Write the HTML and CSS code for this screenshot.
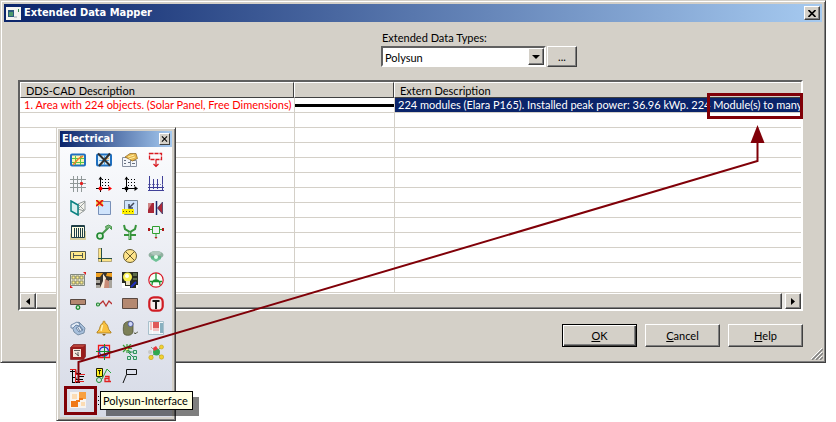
FILE: index.html
```
<!DOCTYPE html>
<html lang="en">
<head>
<title>Extended Data Mapper</title>
<meta charset="utf-8">
<meta name="viewport" content="width=device-width, initial-scale=1">
<link rel="stylesheet" href="styles.css">
</head>
<body>

<main class="dialog">
  <header class="titlebar">
    <svg class="app_icon" viewBox="0 0 15 13" shape-rendering="crispEdges">
      <path fill="#f4f4f0" d="M0 0h15v13H0z"/>
      <path fill="#2c5a7c" d="M2 3h6v7H2z"/>
      <path fill="#4d9a6c" d="M3 5h4v4H3z"/>
      <path fill="#c8ccd0" d="M8 9h3v2H8z"/>
      <path fill="#3a8a50" d="M12 2h1v3h-1z"/>
    </svg>
    <h1>Extended Data Mapper</h1>
    <button class="close" aria-label="Close">
      <svg viewBox="0 0 8 7"><path stroke="#000" stroke-width="1.6" d="M.5 0l7 7M7.500 0l-7 7"/></svg>
    </button>
  </header>

  <form class="content">
    <div class="types">
      <label for="data_type">Extended Data Types:</label>
      <div class="types_row">
        <span class="combo">
          <select id="data_type"><option>Polysun</option></select>
          <span class="combo_arrow"></span>
        </span>
        <button type="button" class="btn browse">...</button>
      </div>
    </div>

    <div class="list">
      <table>
        <colgroup>
          <col class="col_dds">
          <col class="col_link">
          <col>
        </colgroup>
        <thead>
          <tr><th>DDS-CAD Description</th><th></th><th>Extern Description</th></tr>
        </thead>
        <tbody>
          <tr>
            <td class="unmatched">1. Area with 224 objects. (Solar Panel, Free Dimensions)</td>
            <td class="linked"><hr></td>
            <td class="selected">224 modules (Elara P165). Installed peak power: 36.96 kWp. 224 Module(s) to many</td>
          </tr>
          <tr><td></td><td></td><td></td></tr>
          <tr><td></td><td></td><td></td></tr>
          <tr><td></td><td></td><td></td></tr>
          <tr><td></td><td></td><td></td></tr>
          <tr><td></td><td></td><td></td></tr>
          <tr><td></td><td></td><td></td></tr>
          <tr><td></td><td></td><td></td></tr>
          <tr><td></td><td></td><td></td></tr>
          <tr><td></td><td></td><td></td></tr>
          <tr><td></td><td></td><td></td></tr>
          <tr><td></td><td></td><td></td></tr>
          <tr><td></td><td></td><td></td></tr>
        </tbody>
      </table>
      <div class="scrollbar">
        <button type="button" class="scroll_btn" aria-label="Scroll left"><svg viewBox="0 0 4 7"><path d="M4 0v7L0 3.500z"/></svg></button>
        <span class="thumb"></span>
        <button type="button" class="scroll_btn" aria-label="Scroll right"><svg viewBox="0 0 4 7"><path d="M0 0v7l4-3.500z"/></svg></button>
      </div>
    </div>

    <div class="actions">
      <button type="button" class="btn default"><u>O</u>K</button>
      <button type="button" class="btn"><u>C</u>ancel</button>
      <button type="button" class="btn"><u>H</u>elp</button>
    </div>
  </form>

  <svg class="grip" viewBox="0 0 12 12">
    <path stroke="#fff" d="M0 11L11 0M4 11l7-7M8 11l3-3"/>
    <path stroke="#808080" stroke-width="1.500" d="M1 12L12 1M5 12l7-7M9 12l3-3"/>
  </svg>
</main>

<aside class="palette">
  <header class="palette_title">
    <h2>Electrical</h2>
    <button class="close small" aria-label="Close palette">
      <svg viewBox="0 0 8 7"><path stroke="#000" stroke-width="1.200" d="M1 .5l6 6M7 .5l-6 6"/></svg>
    </button>
  </header>
  <div class="tools">
    <!-- grid and view -->
    <button class="tool" aria-label="Edit plan"><svg viewBox="0 0 16 16"><rect x="1" y="2.500" width="14" height="11" rx="1" fill="#fff4b0" stroke="#2070c0" stroke-width="2"/><path stroke="#58c848" d="M5.500 4v9M10.500 4v9M2 6.500h12M2 10.500h12"/><path stroke="#f08030" stroke-width="1.500" fill="none" d="M3 13l5-6 5-3"/></svg></button>
    <button class="tool" aria-label="Delete plan"><svg viewBox="0 0 16 16"><rect x="1" y="2.500" width="14" height="11" rx="1" fill="#dff0f8" stroke="#2070c0" stroke-width="2"/><path stroke="#58a8e8" d="M3 8.500h10M8.500 4v9"/><path stroke="#f0a040" d="M9 8l4-2"/><path stroke="#303030" stroke-width="2" d="M2 1.500l12 12M14 1.500L3 14"/></svg></button>
    <button class="tool" aria-label="Properties"><svg viewBox="0 0 16 16"><path fill="#f4f6fa" stroke="#8890a0" d="M.5 5.500h8v9h-8zM8.500 8.500h6v6h-6z"/><path fill="#e8b850" stroke="#8a6420" stroke-width=".7" d="M3 5l5-3.500h6l1.500 5-5 2.500z"/><path stroke="#fff0a0" d="M6 5l6-2M7 7l6-2"/><path stroke="#687080" d="M2 8.500h2M2 11.500h2M6 10.500h2M10 11.500h3"/></svg></button>
    <button class="tool" aria-label="Move area"><svg viewBox="0 0 16 16"><rect x="1.500" y="1.500" width="12" height="6" fill="none" stroke="#d81820" stroke-width="1.300" stroke-dasharray="4 1"/><path stroke="#d81820" stroke-width="1.200" fill="none" d="M8 8v7M5.500 12L8 14.500l2.500-2.500"/></svg></button>

    <button class="tool" aria-label="Grid"><svg viewBox="0 0 16 16"><path stroke="#909898" d="M3.500 0v16M7.500 0v16M11.500 0v16M0 3.500h16M0 7.500h16M0 11.500h16"/><path stroke="#e02020" stroke-width="2" d="M11.500 6v3M10 7.500h3"/></svg></button>
    <button class="tool" aria-label="Origin"><svg viewBox="0 0 16 16"><path stroke="#000" stroke-dasharray="1 2" d="M6 3.500h9M6 6.500h9M6 9.500h9"/><path stroke="#000" d="M4.500 1v15M0 12.500h14"/><path d="M2.500 3.500l2-3 2 3z"/><path fill="#f00" d="M2.500 12.500a2 2 0 1 0 4 0a2 2 0 1 0-4 0M12.500 10v5l3.500-2.500z"/></svg></button>
    <button class="tool" aria-label="Grid origin"><svg viewBox="0 0 16 16"><path stroke="#000" stroke-dasharray="1 2" d="M6 3.500h9M6 6.500h9M6 9.500h9"/><path stroke="#000" d="M4.500 1v15M0 12.500h14"/><path d="M2.500 3.500l2-3 2 3zM2.500 12.500a2 2 0 1 0 4 0a2 2 0 1 0-4 0M12.500 10v5l3.500-2.500z"/></svg></button>
    <button class="tool" aria-label="Levels"><svg viewBox="0 0 16 16"><path stroke="#404098" d="M1.500 0v15M5.500 3v10M9.500 3v10M14.500 0v15M0 11.500h16M0 14.500h16"/><path stroke="#8080b8" stroke-dasharray="1 1" d="M0 8.500h16"/></svg></button>

    <!-- rooms -->
    <button class="tool" aria-label="3D view"><svg viewBox="0 0 16 16"><path fill="#f4f4ee" stroke="#808888" stroke-width=".8" d="M8 4l7-3v9l-7 5zM8 9l7-7M8 9l6 2M8 4l6 6"/><path fill="#d8f0f0" stroke="#088080" stroke-width="1.500" d="M1 1l7 4v10l-7-4z"/></svg></button>
    <button class="tool" aria-label="New sheet"><svg viewBox="0 0 16 16"><path fill="#d0e4fc" stroke="#7890b8" d="M2.500 1.500h12v13h-12z"/><path fill="#f0e060" d="M0 0h7v6H0z"/><path stroke="#e01010" stroke-width="1.700" d="M0 0l7 6M7 0L0 6"/></svg></button>
    <button class="tool" aria-label="Measure"><svg viewBox="0 0 16 16"><path fill="#d0e4fc" stroke="#788898" d="M2.500.5h13v14h-13z"/><path stroke="#404858" stroke-width="1.500" fill="none" d="M12 3L7 8M7 4v4h4"/><path fill="#fff000" d="M0 9h12v5H0z"/><path stroke="#605800" stroke-dasharray="1 2" d="M1 11.500h10"/></svg></button>
    <button class="tool" aria-label="Mirror"><svg viewBox="0 0 16 16"><path fill="#a82838" d="M0 3h6v10H0z"/><path fill="#d08888" d="M0 3h4L0 10z"/><path stroke="#182868" stroke-width="1.500" d="M8.500 1v14"/><path fill="#b02838" stroke="#303060" stroke-width=".7" d="M14.500 2v12L9.500 8z"/></svg></button>

    <button class="tool" aria-label="Distribution board"><svg viewBox="0 0 16 16"><path fill="#d8d0a0" d="M0 10l4-3h12v9H0z"/><path fill="#fffde0" stroke="#204048" d="M1.500 1.500h13v12h-13z"/><path stroke="#204048" d="M1 2.500h14M4.500 4v9M6.500 4v9M8.500 4v9M10.500 4v9M12.500 4v9"/></svg></button>
    <button class="tool" aria-label="Switch"><svg viewBox="0 0 16 16"><path stroke="#48984c" stroke-width="2" fill="none" d="M6 10l6-6"/><circle cx="4" cy="12" r="3" fill="#d8f0d8" stroke="#208830" stroke-width="1.700"/><path fill="#80b880" stroke="#48984c" d="M10.500 5.500l-1-3 3-1.500 3 1.500v3l-2-2z"/></svg></button>
    <button class="tool" aria-label="Socket"><svg viewBox="0 0 16 16"><path stroke="#38943c" stroke-width="2" fill="none" d="M2 1l1 4 5 3 5-3 1-4M2 11h12"/><path stroke="#38943c" stroke-width="3" d="M8 7v9"/><path stroke="#90d090" d="M7.500 8v7"/></svg></button>
    <button class="tool" aria-label="Junction box"><svg viewBox="0 0 16 16"><path stroke="#30a030" fill="none" d="M4.500 2.500h7v7h-7zM1 5.500h3M12 5.500h3M8 10v3"/><path fill="#b01818" d="M0 4h2v3H0zM14 4h2v3h-2zM6.500 13h3L8 15z"/></svg></button>

    <!-- luminaires -->
    <button class="tool" aria-label="Fluorescent lamp"><svg viewBox="0 0 16 16"><path fill="#ffe98a" stroke="#505850" d="M.5 3.500h15v8H.5z"/><path stroke="#505850" fill="none" d="M3.500 5v5M12.500 5v5M3 7.500h10"/></svg></button>
    <button class="tool" aria-label="Cable tray"><svg viewBox="0 0 16 16"><path fill="#fce488" stroke="#908050" stroke-width=".6" d="M2.500.5h3v10h10v3h-13z"/><path stroke="#285048" d="M5.500 0v14M2 10.500h14"/></svg></button>
    <button class="tool" aria-label="Lamp"><svg viewBox="0 0 16 16"><circle cx="8" cy="8" r="6.500" fill="#ffe48a" stroke="#685c30"/><path stroke="#685c30" d="M3.500 3.500l9 9M12.500 3.500l-9 9"/></svg></button>
    <button class="tool" aria-label="Spot"><svg viewBox="0 0 16 16"><ellipse cx="8" cy="7" rx="7.500" ry="4" fill="#90b0a0"/><ellipse cx="8" cy="5" rx="5" ry="2" fill="#b0c8bc"/><path fill="#50b880" opacity=".8" d="M3 8h10l0 3-5 3-5-3z"/><circle cx="8" cy="9" r="2" fill="#e8fff0"/></svg></button>

    <button class="tool" aria-label="Lamp field"><svg viewBox="0 0 16 16"><path fill="#e8e4c8" stroke="#808880" d="M.5 2.500h14v11H.5z"/><path fill="#fff088" stroke="#787c60" stroke-width=".8" d="M2 4h3v3H2zM6 4h3v3H6zM10 4h3v3h-3zM2 9h3v3H2zM6 9h3v3H6zM10 9h3v3h-3z"/><path fill="#e02020" d="M13 0h3v3zM0 13v3h3z"/></svg></button>
    <button class="tool" aria-label="Render"><svg viewBox="0 0 16 16"><path fill="#383430" d="M0 0h16v16H0z"/><path fill="#f0a020" d="M0 1h7L4 5H0zM11 1h5v4l-6-1z"/><path fill="#f8ead8" d="M7 2l3 4-1 10H4l3-7z"/><path fill="#c88c78" d="M9 7l4 2v7H8z"/><path fill="#a8a49c" d="M0 8h4v3H0zM13 8h3v8h-3zM0 13h4v3H0z"/></svg></button>
    <button class="tool" aria-label="Light calculation"><svg viewBox="0 0 16 16"><path fill="#282c20" d="M0 0h16v16H0z"/><path fill="#5c6c48" d="M11 1h4v3h-4zM11 6h4v2h-4z"/><circle cx="5.500" cy="5" r="4.500" fill="#f8f050"/><circle cx="5" cy="4" r="2" fill="#fffff0"/><path fill="#e8e0c0" d="M4 9h4v4H4z"/><path fill="#fff" d="M0 11h3v5H0zM3 14h5v2H3zM14 13h2v3h-2z"/><path stroke="#2030c0" stroke-width="2" d="M9 15l5-5"/></svg></button>
    <button class="tool" aria-label="Phase"><svg viewBox="0 0 16 16"><circle cx="8" cy="8" r="7.200" fill="#f8fff8" stroke="#d81828" stroke-width="1.200"/><path stroke="#189030" stroke-width="1.300" fill="none" d="M8 1v7M2 9.500h12M4 13c0-3 1-5 4-5s4 2 4 5"/></svg></button>

    <!-- heating, alarms -->
    <button class="tool" aria-label="Heating panel"><svg viewBox="0 0 16 16"><path class="panel_fill" stroke="#584840" d="M.5 3.500h15v5H.5z"/><circle cx="8" cy="11.500" r="1.800" fill="#d8f0d8" stroke="#208830" stroke-width="1.300"/></svg></button>
    <button class="tool" aria-label="Heating cable"><svg viewBox="0 0 16 16"><path stroke="#b83030" stroke-width="1.300" fill="none" d="M4 8l3-3 3 5 3-5 3 3"/><circle cx="2" cy="8.500" r="1.500" fill="#d8f0d8" stroke="#208830" stroke-width="1.200"/></svg></button>
    <button class="tool" aria-label="Heating foil"><svg viewBox="0 0 16 16"><path class="panel_fill" stroke="#584840" d="M.5 2.500h15v10H.5z"/></svg></button>
    <button class="tool" aria-label="Thermostat"><svg viewBox="0 0 16 16"><rect x="1.300" y="1.300" width="13.400" height="13.400" rx="4.500" fill="#f4eeee" stroke="#d01c24" stroke-width="2.200"/><path stroke="#181818" stroke-width="2" d="M4.500 5h7M8 5v8"/></svg></button>

    <button class="tool" aria-label="Telephone"><svg viewBox="0 0 16 16"><path fill="#a8c0dc" stroke="#688098" stroke-width=".8" d="M2 6l7-4 6 6-1 5-6 2-4-3z"/><path fill="#e4ecf6" stroke="#587498" stroke-width=".8" d="M1 5l6-3 3 2-1 2-3-1-3 3H1zM6 8l4-2 3 4-4 2z"/><path stroke="#486488" stroke-width=".8" d="M8 8l2 3M10 7l2 3"/></svg></button>
    <button class="tool" aria-label="Alarm"><svg viewBox="0 0 16 16"><path fill="#f8c040" stroke="#a87818" stroke-width=".8" d="M8 1c1 0 1 1 1 2 3 1 3 5 4 7l2 2v1H1v-1l2-2c1-2 1-6 4-7 0-1 0-2 1-2z"/><path stroke="#fff0b0" stroke-width="1.500" d="M6.500 5l-1.500 6"/><path fill="#805818" d="M6 14h4l-2 2z"/></svg></button>
    <button class="tool" aria-label="Detector"><svg viewBox="0 0 16 16"><path fill="#7c8058" stroke="#505438" stroke-width=".8" d="M2 4c2-3 8-4 9-1v9c-1 4-7 4-9 2-1-3-1-7 0-10z"/><circle cx="8.500" cy="4" r="2.500" fill="#d0d8f8" stroke="#4450a0" stroke-width=".8"/><path stroke="#404428" fill="none" d="M12 13l2 .5 2-2"/></svg></button>
    <button class="tool" aria-label="Climate"><svg viewBox="0 0 16 16"><path fill="#f0f4f6" stroke="#a8c0cc" d="M.5 1.500h15v13H.5z"/><path fill="#e05858" d="M5 2h6v6H5z"/><path fill="#f4c0c0" d="M2 2h3v8H2zM5 8h6v3H5z"/><path fill="#88b0c0" d="M12 3h3v10h-3z"/><path stroke="#fff" stroke-width=".8" d="M4.500 2v12M11.500 2v12"/></svg></button>

    <!-- documents, schematics -->
    <button class="tool" aria-label="Catalogue"><svg viewBox="0 0 16 16"><path fill="#981c1c" stroke="#701010" stroke-width=".6" d="M.5 3.500l3-3h12v12l-2 3H.5z"/><path fill="#b84038" d="M1 3l3-2h11l-2 2z"/><path fill="#f4e8dc" d="M3 5h8v8H3z"/><path stroke="#383838" stroke-width=".8" fill="none" d="M4 6.500h6M5 9l4 3M8 8v4"/></svg></button>
    <button class="tool" aria-label="Target"><svg viewBox="0 0 16 16"><path fill="none" stroke="#f01818" stroke-width="1.300" d="M2.500 1.500h11v12h-11z"/><circle cx="8" cy="7.500" r="4.500" fill="none" stroke="#2030d0" stroke-width="1.300"/><path stroke="#189030" d="M8.500 0v16M0 7.500h16"/></svg></button>
    <button class="tool" aria-label="Generate circuit"><svg viewBox="0 0 16 16"><path stroke="#38a038" stroke-width="1.200" d="M5 0v9M0 4.500h10M1 1l8 8M9 0L1 8"/><path fill="#fff080" d="M4 3h2v3H4z"/><path stroke="#309060" fill="#c8f0d8" d="M6 8l6 0M6 8l6 6M11.500 6.500h3v3h-3zM11.500 12.500h3v3h-3zM5.500 12.500h3v3h-3z"/></svg></button>
    <button class="tool" aria-label="Network"><svg viewBox="0 0 16 16"><path stroke="#909890" d="M3 3l10 10M13 3L3 13"/><circle cx="8.500" cy="8" r="3.500" fill="#30a850"/><path fill="#e83840" d="M5 4l3-2 2 3-4 2z"/><g fill="#f0d030" stroke="#b89810" stroke-width=".5"><circle cx="13.500" cy="3" r="2"/><circle cx="13.500" cy="13" r="2.200"/><circle cx="3" cy="13.500" r="2.200"/></g><circle cx="2" cy="8" r="2" fill="#c8c8c8"/></svg></button>

    <button class="tool" aria-label="Wiring"><svg viewBox="0 0 16 16"><path stroke="#000" fill="none" d="M2.500 1v14M0 3.500h6v2h5M2 9.500h4v2h7M8 8.500h6M2 14.500h8"/><path stroke="#e02020" fill="none" d="M0 1.500h6v5h9M5.500 2v13M5 13.500h9"/></svg></button>
    <button class="tool" aria-label="Symbols"><svg viewBox="0 0 16 16"><path fill="#fff020" stroke="#202000" d="M.5.500h6v8h-6z"/><path stroke="#202000" d="M2 2.500h3M3.500 2.500v4"/><path stroke="#28a038" fill="none" d="M6 11l5-10 4 4"/><circle cx="3" cy="12" r="2.500" fill="none" stroke="#189030"/><path stroke="#e02020" stroke-width="1.300" fill="none" d="M9 8.500h4v5H9v-3h4M13 13.500h2"/></svg></button>
    <button class="tool" aria-label="Label"><svg viewBox="0 0 16 16"><path stroke="#101010" fill="none" d="M1 15L4.500 6.500v-5h10v5h-10"/></svg></button>
    <span></span>

    <button class="tool" aria-label="Polysun-Interface"><svg viewBox="0 0 16 16"><path fill="#f8f4f0" d="M0 0h16v16H0z"/><path fill="#f8a040" d="M9 0h7v7H9z"/><path fill="#f07818" d="M1 9h7v6H1zM9 6h4v2H9zM6 8h4v2H6z"/><path fill="#fcdcb4" d="M2 2h5v5H2zM11 10h4v4h-4z"/></svg></button>
    <button class="tool" aria-label="Print list"><svg viewBox="0 0 16 16"><path stroke="#000" stroke-dasharray="1 2" fill="none" d="M-4 4.500h16M-4 8.500h16M-4 12.500h16"/></svg></button>
  </div>
  <div class="tooltip" role="tooltip">Polysun-Interface</div>
</aside>

<!-- callouts from the tool to the result it gives -->
<svg class="callouts" viewBox="0 0 836 422">
  <path class="frame" d="M708.500 94.500h93v23h-93zM65.500 387.500h30v26h-30z"/>
  <path class="arrow_line" d="M78.500 383v-21L757.500 161v-20"/>
  <path class="arrow_head" d="M757.500 125l7 18h-14z"/>
</svg>

</body>
</html>
```

FILE: styles.css
```
* {
  box-sizing: border-box;
}
body {
  position: relative;
  margin: 0;
  min-height: 422px;
  background: #fff;
  font: 11px/13px Lato, "Liberation Sans", sans-serif;
  color: #000;
}
h1, h2 {
  margin: 0;
  color: #fff;
  font: bold 11px/14px "DejaVu Sans Condensed", Tahoma, sans-serif;
}
button, select {
  font: inherit;
  color: inherit;
  padding: 0;
  margin: 0;
}
svg {
  display: block;
}

/* dialog window */
.dialog {
  position: relative;
  margin-right: 10px;
  padding: 2px;
  background: #d4d0c8;
  border: 1px solid;
  border-color: #d4d0c8 #404040 #404040 #d4d0c8;
  box-shadow: inset 1px 1px #fff, inset -1px -1px #808080;
}
.titlebar {
  display: flex;
  align-items: center;
  height: 18px;
  margin: 1px;
  padding: 0 2px;
  background: linear-gradient(to right, #0a246a, #a6caf0);
}
.app_icon {
  width: 15px;
  height: 13px;
  margin-right: 3px;
}
.close {
  display: grid;
  place-items: center;
  width: 16px;
  height: 14px;
  margin-left: auto;
  background: #d4d0c8;
  border: 1px solid;
  border-color: #fff #404040 #404040 #fff;
  box-shadow: inset -1px -1px #808080;
}
.close svg {
  width: 8px;
  height: 7px;
}
.close.small {
  width: 11px;
  height: 12px;
  box-shadow: none;
}
.close.small svg {
  width: 7px;
  height: 6px;
}
.content {
  padding: 8px 20px 13px 15px;
}

/* type selection */
.types {
  width: 196px;
  margin: 0 auto 13px 363px;
}
.types label {
  display: block;
  margin: 0 1px 2px;
}
.types_row {
  display: flex;
  gap: 1px;
}
.combo {
  position: relative;
  width: 165px;
}
.combo select {
  width: 100%;
  height: 21px;
  padding: 1px 20px 0 2px;
  appearance: none;
  background: #fff;
  border: 2px solid;
  border-color: #606060 #fff #fff #606060;
  border-radius: 0;
}
.combo_arrow {
  position: absolute;
  top: 2px;
  right: 2px;
  display: grid;
  place-items: center;
  width: 16px;
  height: 17px;
  background: #d4d0c8;
  border: 1px solid;
  border-color: #fff #404040 #404040 #fff;
  box-shadow: inset -1px -1px #808080;
  pointer-events: none;
}
.combo_arrow::after {
  content: "";
  border: 4px solid transparent;
  border-top-color: #000;
  border-bottom: 0;
}
.btn {
  width: 75px;
  height: 23px;
  background: #d4d0c8;
  border: 1px solid;
  border-color: #fff #404040 #404040 #fff;
  box-shadow: inset -1px -1px #808080;
}
.btn.browse {
  width: 30px;
  height: 21px;
}
.btn.default {
  border-color: #000;
  box-shadow: inset 1px 1px #fff, inset -1px -1px #404040, inset -2px -2px #808080;
}

/* mapping list */
.list {
  border: 2px solid;
  border-color: #606060 #fff #fff #606060;
  background: #fff;
}
table {
  width: 100%;
  table-layout: fixed;
  border-collapse: separate;
  border-spacing: 0;
}
.col_dds {
  width: 274px;
}
.col_link {
  width: 100px;
}
th, td {
  padding: 0;
  overflow: hidden;
  white-space: nowrap;
  text-align: left;
  font-weight: normal;
}
th {
  height: 16px;
  padding: 1px 5px 0;
  line-height: 13px;
  background: #d4d0c8;
  border: 1px solid;
  border-color: #fff #404040 #404040 #fff;
}
th:last-child {
  border-right-color: #d4d0c8;
}
td {
  height: 15px;
  padding: 0 4px;
  line-height: 14px;
  border-bottom: 1px solid #d4d0c8;
  border-left: 1px solid #d4d0c8;
}
td:first-child {
  border-left: 0;
}
td.unmatched {
  padding-right: 0;
  color: #f00;
}
td.linked {
  padding: 0;
}
.linked hr {
  height: 3px;
  margin: 0;
  border: 0;
  background: #000;
}
td.selected {
  padding: 0 0 0 3px;
  background: #0a246a;
  color: #fff;
}

.scrollbar {
  display: flex;
  height: 16px;
  background: #eae8e4;
}
.scroll_btn, .thumb {
  background: #d4d0c8;
  border: 1px solid;
  border-color: #fff #404040 #404040 #fff;
  box-shadow: inset -1px -1px #808080;
}
.scroll_btn {
  display: grid;
  place-items: center;
  width: 16px;
}
.scroll_btn svg {
  width: 4px;
  height: 7px;
}
.thumb {
  flex: 1;
  margin-right: 3px;
}

.actions {
  display: flex;
  justify-content: flex-end;
  gap: 8px;
  margin-top: 13px;
}
.grip {
  position: absolute;
  right: 2px;
  bottom: 2px;
  width: 12px;
  height: 12px;
}

/* floating tool palette */
.palette {
  position: absolute;
  top: 127px;
  left: 56px;
  width: 120px;
  padding: 3px;
  background: #d4d0c8;
  border: 1px solid;
  border-color: #d4d0c8 #404040 #404040 #d4d0c8;
  box-shadow: inset 1px 1px #fff, inset -1px -1px #808080;
}
.palette_title {
  display: flex;
  align-items: center;
  height: 16px;
  padding: 0 2px;
  background: linear-gradient(to right, #0a246a, #a6caf0);
}
.tools {
  display: grid;
  grid-template-columns: repeat(4, 26px);
  grid-auto-rows: 24px;
  justify-content: center;
  padding: 1px 0 5px 2px;
  background: linear-gradient(#fafbfd, #d6dae6);
}
.tool {
  display: grid;
  place-items: center;
  background: none;
  border: 0;
}
.tool svg {
  width: 16px;
  height: 16px;
}
.panel_fill {
  fill: #b48870;
}
.tooltip {
  position: absolute;
  top: 263px;
  left: 43px;
  padding: 2px 4px 2px 2px;
  background: #ffffe1;
  border: 1px solid #000;
  box-shadow: 6px 6px rgba(0, 0, 0, .5);
  white-space: nowrap;
}

.callouts {
  position: absolute;
  top: 0;
  left: 0;
  width: 836px;
  height: 422px;
  pointer-events: none;
}
.frame {
  fill: none;
  stroke: #800008;
  stroke-width: 3;
}
.arrow_line {
  fill: none;
  stroke: #800008;
  stroke-width: 2;
}
.arrow_head {
  fill: #800008;
}
```
